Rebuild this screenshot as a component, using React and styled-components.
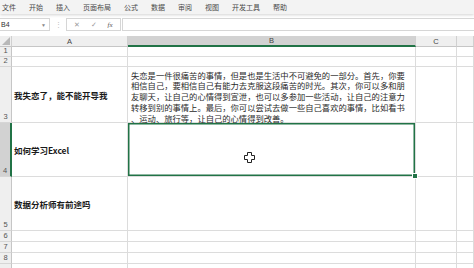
import React from "react";
import styled, { createGlobalStyle, css } from "styled-components";

const GlobalStyle = createGlobalStyle`
  html, body {
    margin: 0;
    padding: 0;
    background: #ffffff;
  }
  body {
    font-family: "Noto Sans CJK SC", "Liberation Sans", sans-serif;
  }
`;

const GREEN = "#217346";
const CJK = `"Noto Sans CJK SC", "Noto Sans", sans-serif`;

const Window = styled.div`
  width: 474px;
  height: 268px;
  overflow: hidden;
  background: #ffffff;
  display: flex;
  flex-direction: column;
`;

const MenuBar = styled.div`
  height: 14px;
  flex: none;
  display: flex;
  align-items: center;
  gap: 13px;
  padding-left: 2px;
  background: #f3f3f3;
  box-shadow: 0 1px 3px rgba(0, 0, 0, 0.18);
  position: relative;
  z-index: 2;
`;

const MenuItem = styled.span`
  font-family: ${CJK};
  font-size: 7px;
  line-height: 14px;
  color: #4a4a4a;
  white-space: nowrap;
`;

const FormulaRow = styled.div`
  height: 22px;
  flex: none;
  display: flex;
  align-items: flex-start;
  padding-top: 4px;
  box-sizing: border-box;
  background: #ffffff;
`;

const NameBox = styled.div`
  width: 50px;
  height: 13px;
  box-sizing: border-box;
  border: 1px solid #d6d6d6;
  border-left: none;
  display: flex;
  align-items: center;
  justify-content: space-between;
  padding: 0 3px 0 1px;
  font-family: "Liberation Sans", sans-serif;
  font-size: 7px;
  color: #333;
`;

const Caret = styled.span`
  font-size: 5px;
  color: #888;
`;

const Dots = styled.span`
  width: 16px;
  text-align: center;
  font-size: 7px;
  line-height: 13px;
  color: #bbb;
`;

const FxBox = styled.div`
  width: 55px;
  height: 13px;
  box-sizing: border-box;
  border: 1px solid #d6d6d6;
  display: flex;
  align-items: center;
  justify-content: space-around;
  padding: 0 2px;
  font-family: "Liberation Serif", serif;
  font-size: 7px;
  color: #9a9a9a;
`;

const FxMark = styled.span`
  font-style: italic;
  color: #555;
`;

const FormulaInput = styled.div`
  flex: 1;
  height: 13px;
  margin-left: 1px;
  box-sizing: border-box;
  border: 1px solid #d6d6d6;
  border-right: none;
`;

const Sheet = styled.div`
  display: grid;
  grid-template-columns: 12px 116px 288px 41px 1fr;
  grid-template-rows: 11px 10px 10px 56px 54px 54px 11px 11px 11px 11px;
  flex: none;
`;

const HeadCell = styled.div`
  box-sizing: border-box;
  background: ${(p) => (p.active ? "#d2d2d2" : "#efefef")};
  border-right: 1px solid #d0d0d0;
  border-bottom: ${(p) => (p.active ? `2px solid ${GREEN}` : "1px solid #c6c6c6")};
  display: flex;
  align-items: center;
  justify-content: center;
  font-family: "Liberation Sans", sans-serif;
  font-size: 7.5px;
  color: #444;
  position: relative;
`;

const Corner = styled(HeadCell)`
  &::after {
    content: "";
    position: absolute;
    right: 1px;
    bottom: 1px;
    width: 0;
    height: 0;
    border-left: 8px solid transparent;
    border-bottom: 8px solid #b8b8b8;
  }
`;

const RowHead = styled.div`
  box-sizing: border-box;
  background: ${(p) => (p.active ? "#d2d2d2" : "#efefef")};
  border-bottom: 1px solid #d6d6d6;
  border-right: ${(p) => (p.active ? `2px solid ${GREEN}` : "1px solid #c6c6c6")};
  display: flex;
  align-items: flex-end;
  justify-content: center;
  padding-bottom: 1px;
  font-family: "Liberation Sans", sans-serif;
  font-size: 7.5px;
  line-height: 8px;
  color: #555;
`;

const Cell = styled.div`
  box-sizing: border-box;
  border-right: 1px solid #dcdcdc;
  border-bottom: 1px solid #dcdcdc;
  position: relative;
  min-width: 0;
  ${(p) =>
    p.selected &&
    css`
      z-index: 1;
      box-shadow: inset 0 0 0 1.5px ${GREEN};
      &::after {
        content: "";
        position: absolute;
        right: -3px;
        bottom: -3px;
        width: 4px;
        height: 4px;
        background: ${GREEN};
        border: 1px solid #fff;
      }
    `}
`;

const Label = styled.div`
  height: 100%;
  display: flex;
  align-items: center;
  padding-left: 2px;
  font-family: ${CJK};
  font-size: 8.5px;
  font-weight: 700;
  color: #1a1a1a;
  white-space: nowrap;
`;

const Wrapped = styled.div`
  padding: 2.5px 0 0 3px;
  font-family: ${CJK};
  font-size: 8.3px;
  line-height: 10.8px;
  color: #2a2a2a;
  white-space: nowrap;
`;

const Line = styled.div`
  height: 10.8px;
  overflow: visible;
`;

const Cursor = styled.svg`
  position: absolute;
  left: 116px;
  top: 29px;
`;

const menus = ["文件", "开始", "插入", "页面布局", "公式", "数据", "审阅", "视图", "开发工具", "帮助"];

const answer = [
  "失恋是一件很痛苦的事情，但是也是生活中不可避免的一部分。首先，你要",
  "相信自己，要相信自己有能力去克服这段痛苦的时光。其次，你可以多和朋",
  "友聊天，让自己的心情得到宣泄，也可以多参加一些活动，让自己的注意力",
  "转移到别的事情上。最后，你可以尝试去做一些自己喜欢的事情，比如看书",
  "、运动、旅行等，让自己的心情得到改善。",
];

const rows = [
  { n: 1 },
  { n: 2 },
  { n: 3, a: "我失恋了，能不能开导我", b: answer },
  { n: 4, a: "如何学习Excel", selected: true },
  { n: 5, a: "数据分析师有前途吗" },
  { n: 6 },
  { n: 7 },
  { n: 8 },
  { n: 9, hideNumber: true },
];

const App = () => {
  return (
    <>
      <GlobalStyle />
      <Window>
        <MenuBar>
          {menus.map((m) => (
            <MenuItem key={m}>{m}</MenuItem>
          ))}
        </MenuBar>
        <FormulaRow>
          <NameBox>
            B4 <Caret>▼</Caret>
          </NameBox>
          <Dots>⋮</Dots>
          <FxBox>
            <span>✕</span>
            <span>✓</span>
            <FxMark>fx</FxMark>
          </FxBox>
          <FormulaInput />
        </FormulaRow>
        <Sheet>
          <Corner />
          <HeadCell>A</HeadCell>
          <HeadCell active>B</HeadCell>
          <HeadCell>C</HeadCell>
          <HeadCell />
          {rows.map((r) => (
            <React.Fragment key={r.n}>
              <RowHead active={r.selected}>{r.hideNumber ? "" : r.n}</RowHead>
              <Cell>{r.a && <Label>{r.a}</Label>}</Cell>
              <Cell selected={r.selected}>
                {r.b && (
                  <Wrapped>
                    {r.b.map((line) => (
                      <Line key={line}>{line}</Line>
                    ))}
                  </Wrapped>
                )}
                {r.selected && (
                  <Cursor width="11" height="11" viewBox="0 0 11 11">
                    <path
                      d="M3.5 0.5h4v3h3v4h-3v3h-4v-3h-3v-4h3z"
                      fill="#fff"
                      stroke="#222"
                      strokeWidth="1"
                    />
                  </Cursor>
                )}
              </Cell>
              <Cell />
              <Cell />
            </React.Fragment>
          ))}
        </Sheet>
      </Window>
    </>
  );
};

export default App;
